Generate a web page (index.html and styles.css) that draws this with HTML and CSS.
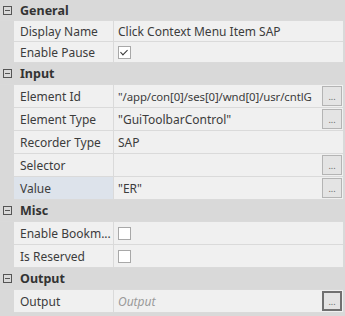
FILE: index.html
```html
<!DOCTYPE html>
<html lang="en">
<head>
  <meta charset="UTF-8" />
  <title>Properties</title>
  <link rel="stylesheet" href="styles.css">
</head>
<body>
  <div id="grid">
    <div class="cat first">
      <div class="cat-head"><span class="toggle"></span>General</div>
      <div class="row short"><div class="label">Display Name</div><div class="value">Click Context Menu Item SAP</div></div>
      <div class="row short"><div class="label">Enable Pause</div><div class="value"><span class="check on"></span></div></div>
    </div>
    <div class="cat">
      <div class="cat-head"><span class="toggle"></span>Input</div>
      <div class="row"><div class="label">Element Id</div><div class="value"><span class="text long">"/app/con[0]/ses[0]/wnd[0]/usr/cntlG</span><span class="dots">...</span></div></div>
      <div class="row"><div class="label">Element Type</div><div class="value"><span class="text">"GuiToolbarControl"</span><span class="dots">...</span></div></div>
      <div class="row"><div class="label">Recorder Type</div><div class="value">SAP</div></div>
      <div class="row"><div class="label">Selector</div><div class="value"><span class="text"></span><span class="dots">...</span></div></div>
      <div class="row selected"><div class="label">Value</div><div class="value"><span class="text">"ER"</span><span class="dots">...</span></div></div>
    </div>
    <div class="cat">
      <div class="cat-head"><span class="toggle"></span>Misc</div>
      <div class="row"><div class="label">Enable Bookm...</div><div class="value"><span class="check"></span></div></div>
      <div class="row"><div class="label">Is Reserved</div><div class="value"><span class="check"></span></div></div>
    </div>
    <div class="cat">
      <div class="cat-head"><span class="toggle"></span>Output</div>
      <div class="row"><div class="label">Output</div><div class="value"><span class="text placeholder">Output</span><span class="dots active">...</span></div></div>
    </div>
  </div>
</body>
</html>
```

FILE: styles.css
```css
:root {
  --gutter: #d9d9d9;
  --cell: #f0f0f0;
  --line: #dadada;
  --text: #3c3c3c;
}
body {
  margin: 0;
  background: var(--gutter);
  font-family: "Segoe UI", "Noto Sans", sans-serif;
  font-size: 12px;
  color: var(--text);
}
#grid {
  width: 343px;
  background: var(--gutter);
}
.cat-head {
  display: flex;
  align-items: center;
  height: 21px;
  border-bottom: 1px solid var(--line);
  font-weight: bold;
  font-size: 12.5px;
  color: #333;
}
.first .cat-head {
  height: 20px;
}
.toggle {
  position: relative;
  box-sizing: border-box;
  width: 9px;
  height: 9px;
  margin: 0 8px 0 3px;
  border: 1px solid #555;
}
.toggle::after {
  content: "";
  position: absolute;
  left: 1px;
  top: 3px;
  width: 5px;
  height: 1px;
  background: #555;
}
.row {
  display: flex;
  height: 22px;
  margin-left: 14px;
  border-bottom: 1px solid var(--line);
  background: var(--cell);
}
.row.short {
  height: 20px;
}
.label {
  width: 100px;
  padding-left: 6px;
  box-sizing: border-box;
  border-right: 1px solid var(--line);
  display: flex;
  align-items: center;
  white-space: nowrap;
  overflow: hidden;
}
.selected .label {
  background: #dde3eb;
}
.value {
  flex: 1;
  display: flex;
  align-items: center;
  padding-left: 4px;
  min-width: 0;
}
.text {
  flex: 1;
  white-space: nowrap;
  overflow: hidden;
}
.text.long {
  font-size: 11.4px;
  letter-spacing: -0.1px;
}
.placeholder {
  font-style: italic;
  color: #9a9a9a;
}
.dots {
  box-sizing: border-box;
  width: 20px;
  height: 20px;
  margin-right: 1px;
  border: 1px solid #b4b4b4;
  background: #e4e4e4;
  color: #666;
  font-size: 9px;
  line-height: 20px;
  text-align: center;
}
.dots.active {
  border: 2px solid #707070;
  line-height: 18px;
}
.check {
  position: relative;
  box-sizing: border-box;
  width: 13px;
  height: 13px;
  border: 1px solid #a8a8a8;
  background: #fff;
}
.check.on::after {
  content: "";
  position: absolute;
  left: 3px;
  top: 1px;
  width: 3px;
  height: 6px;
  border: solid #333;
  border-width: 0 1.5px 1.5px 0;
  transform: rotate(45deg);
}
```
